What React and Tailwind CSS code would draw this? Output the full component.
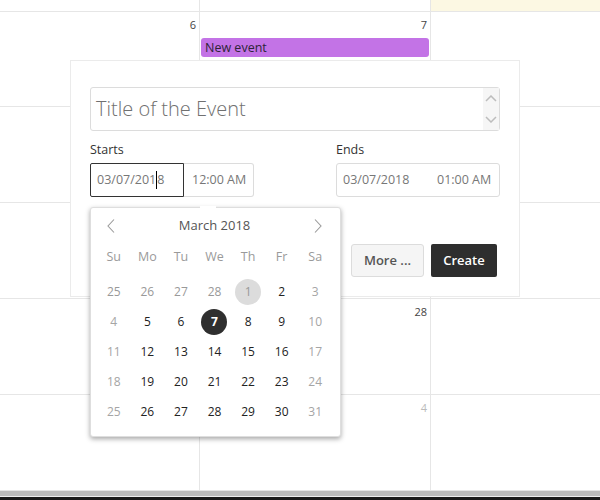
import React from "react";

const weeks = [
  [
    { d: 25, c: "muted" },
    { d: 26, c: "muted" },
    { d: 27, c: "muted" },
    { d: 28, c: "muted" },
    { d: 1, c: "today" },
    { d: 2 },
    { d: 3, c: "weekend" },
  ],
  [
    { d: 4, c: "weekend" },
    { d: 5 },
    { d: 6 },
    { d: 7, c: "selected" },
    { d: 8 },
    { d: 9 },
    { d: 10, c: "weekend" },
  ],
  [
    { d: 11, c: "weekend" },
    { d: 12 },
    { d: 13 },
    { d: 14 },
    { d: 15 },
    { d: 16 },
    { d: 17, c: "weekend" },
  ],
  [
    { d: 18, c: "weekend" },
    { d: 19 },
    { d: 20 },
    { d: 21 },
    { d: 22 },
    { d: 23 },
    { d: 24, c: "weekend" },
  ],
  [
    { d: 25, c: "weekend" },
    { d: 26 },
    { d: 27 },
    { d: 28 },
    { d: 29 },
    { d: 30 },
    { d: 31, c: "weekend" },
  ],
];

const dayNames = ["Su", "Mo", "Tu", "We", "Th", "Fr", "Sa"];

function DayCell({ day }) {
  if (day.c === "selected") {
    return (
      <div className="flex h-[30px] items-center justify-center">
        <span className="flex h-[26px] w-[26px] items-center justify-center rounded-full bg-[#2f2f2f] text-[12px] font-bold text-white">
          {day.d}
        </span>
      </div>
    );
  }
  if (day.c === "today") {
    return (
      <div className="flex h-[30px] items-center justify-center">
        <span className="flex h-[26px] w-[26px] items-center justify-center rounded-full bg-[#dcdcdc] text-[12px] text-[#999]">
          {day.d}
        </span>
      </div>
    );
  }
  const color =
    day.c === "muted"
      ? "text-[#999]"
      : day.c === "weekend"
      ? "text-[#a5a5a5]"
      : "text-[#222]";
  return (
    <div className={`flex h-[30px] items-center justify-center text-[12px] ${color}`}>
      {day.d}
    </div>
  );
}

function Chevron({ dir }) {
  return (
    <svg width="10" height="16" viewBox="0 0 10 16" fill="none">
      {dir === "left" ? (
        <polyline points="8,1.5 2,8 8,14.5" stroke="#9a9a9a" strokeWidth="1.1" />
      ) : (
        <polyline points="2,1.5 8,8 2,14.5" stroke="#9a9a9a" strokeWidth="1.1" />
      )}
    </svg>
  );
}

function WeekRow({ left, mid, h = "h-[96px]" }) {
  return (
    <div className={`grid ${h} grid-cols-[200px_231px_1fr] border-b border-[#e6e6e6]`}>
      <div className="border-r border-[#e6e6e6]">{left}</div>
      <div className="border-r border-[#e6e6e6]">{mid}</div>
      <div />
    </div>
  );
}

function DayNum({ children, light }) {
  return (
    <div
      className={`pr-[3px] pt-[5px] text-right text-[11px] leading-[16px] ${
        light ? "text-[#bbb]" : "text-[#444]"
      }`}
    >
      {children}
    </div>
  );
}

function App() {
  return (
    <div className="relative h-[500px] w-[600px] overflow-hidden bg-white font-['Open_Sans',sans-serif]">
      {/* calendar month grid behind */}
      <div className="flex flex-col">
        <div className="grid h-[12px] grid-cols-[200px_231px_1fr] border-b border-[#e6e6e6]">
          <div className="border-r border-[#e6e6e6]" />
          <div className="border-r border-[#e6e6e6]" />
          <div className="bg-[#fcf8e3]" />
        </div>

        <WeekRow
          h="h-[95px]"
          left={<DayNum>6</DayNum>}
          mid={
            <>
              <DayNum>7</DayNum>
              <div className="ml-[1px] mr-[1px] mt-[5px] h-[19px] rounded-[3px] bg-[#c373e6] pl-[4px] text-[12.5px] leading-[19px] text-[#2e2438]">
                New event
              </div>
            </>
          }
        />
        <WeekRow />
        <WeekRow />
        <WeekRow mid={<DayNum>28</DayNum>} />
        <WeekRow mid={<DayNum light>4</DayNum>} />

        {/* bottom scroll bars */}
        <div className="h-[5px] bg-[#bdbdbd]" />
        <div className="h-[1px] bg-[#f0f0f0]" />
        <div className="h-[3px] bg-[#1c1c1c]" />
      </div>

      {/* new event form panel */}
      <div className="absolute left-[70px] top-[60px] h-[237px] w-[450px] border border-[#ebebeb] bg-white px-[19px] pt-[26px]">
        <div className="flex h-[44px] rounded-[3px] border border-[#dcdcdc]">
          <div className="flex flex-1 items-center pl-[5px] text-[20px] font-light text-[#707070]">
            Title of the Event
          </div>
          <div className="flex w-[16px] flex-col items-center justify-between bg-[#f6f6f6] py-[7px]">
            <svg width="12" height="7" viewBox="0 0 12 7" fill="none">
              <polyline points="1,6 6,1 11,6" stroke="#bdbdbd" strokeWidth="1.5" />
            </svg>
            <svg width="12" height="7" viewBox="0 0 12 7" fill="none">
              <polyline points="1,1 6,6 11,1" stroke="#bdbdbd" strokeWidth="1.5" />
            </svg>
          </div>
        </div>

        <div className="mt-[11px] flex justify-between">
          <div className="w-[164px]">
            <div className="text-[12.5px] leading-[16px] text-[#333]">Starts</div>
            <div className="mt-[5px] flex h-[34px]">
              <div className="flex w-[94px] items-center rounded-l-[2px] border border-[#333] pl-[6px] text-[12.5px] text-[#777]">
                03/07/201
                <span className="inline-block h-[18px] w-px bg-black" />
                8
              </div>
              <div className="flex w-[70px] items-center rounded-r-[3px] border border-l-0 border-[#dcdcdc] pl-[8px] text-[12.5px] text-[#777]">
                12:00 AM
              </div>
            </div>
          </div>
          <div className="w-[164px]">
            <div className="text-[12.5px] leading-[16px] text-[#333]">Ends</div>
            <div className="mt-[5px] flex h-[34px] items-center rounded-[3px] border border-[#dcdcdc] text-[12.5px] text-[#777]">
              <span className="w-[100px] pl-[6px]">03/07/2018</span>
              <span>01:00 AM</span>
            </div>
          </div>
        </div>

        <div className="mt-[47px] flex justify-end gap-[7px] pr-[3px]">
          <button className="h-[33px] w-[73px] rounded-[3px] border border-[#dcdcdc] bg-[#f5f5f5] text-[13px] font-semibold text-[#555]">
            More ...
          </button>
          <button className="h-[33px] w-[66px] rounded-[2px] bg-[#2e2e2e] text-[13px] font-semibold text-white">
            Create
          </button>
        </div>
      </div>

      {/* date picker popup */}
      <div className="absolute left-[90px] top-[207px] h-[230px] w-[251px] rounded-[3px] border border-[#dedede] bg-white pl-[6px] shadow-[0_2px_5px_rgba(0,0,0,0.35)]">
        <div className="absolute left-[109px] top-[-2px] h-[3px] w-[16px] bg-white" />
        <div className="w-[235px]">
          <div className="flex h-[35px] items-center justify-between px-[9px]">
            <Chevron dir="left" />
            <span className="text-[13px] text-[#555]">March 2018</span>
            <Chevron dir="right" />
          </div>
          <div className="grid h-[28px] grid-cols-7 items-center">
            {dayNames.map((n) => (
              <div key={n} className="text-center text-[12.5px] text-[#9a9a9a]">
                {n}
              </div>
            ))}
          </div>
          <div className="mt-[6px]">
            {weeks.map((w, i) => (
              <div key={i} className="grid grid-cols-7">
                {w.map((day, j) => (
                  <DayCell key={j} day={day} />
                ))}
              </div>
            ))}
          </div>
        </div>
      </div>
    </div>
  );
}

export default App;
